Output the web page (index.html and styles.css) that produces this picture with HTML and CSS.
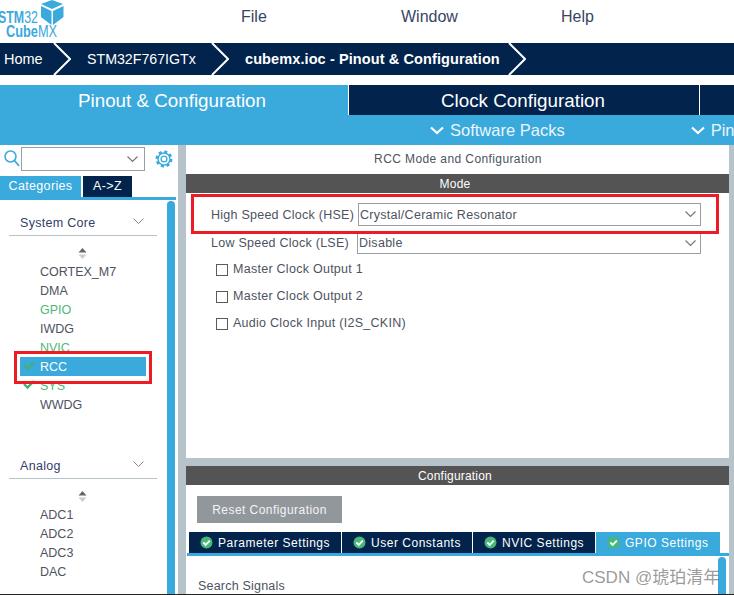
FILE: index.html
```html
<!DOCTYPE html>
<html lang="en">
<head>
<meta charset="utf-8">
<title>STM32CubeMX</title>
<link rel="stylesheet" href="styles.css">
</head>
<body>
<div class="app">
  <header class="top">
    <svg class="logo" width="66" height="43" viewBox="0 0 66 43">
      <polygon fill="#3aa9dc" points="41,4 52,0 63,4 52,9"/>
      <polygon fill="#3aa9dc" points="41,6 51.5,11 51.5,25 43.5,19 41,17"/>
      <polygon fill="#3aa9dc" points="53,11 63.5,6 63.5,17 53,25"/>
      <text x="-2" y="23" class="logo-t" textLength="40" lengthAdjust="spacingAndGlyphs"><tspan font-weight="700">STM</tspan>32</text>
      <text x="6" y="36.5" class="logo-t" textLength="51" lengthAdjust="spacingAndGlyphs"><tspan font-weight="700">Cube</tspan>MX</text>
    </svg>
    <nav class="menu">
      <span class="menu-item">File</span>
      <span class="menu-item">Window</span>
      <span class="menu-item">Help</span>
    </nav>
  </header>

  <div class="crumbs">
    <span class="crumb crumb-home">Home</span>
    <svg class="chev" width="18" height="32" viewBox="0 0 18 32"><path d="M1 0 L17 16 L1 32" fill="none" stroke="#fff" stroke-width="2"/></svg>
    <span class="crumb crumb-mcu">STM32F767IGTx</span>
    <svg class="chev" width="18" height="32" viewBox="0 0 18 32"><path d="M1 0 L17 16 L1 32" fill="none" stroke="#fff" stroke-width="2"/></svg>
    <span class="crumb crumb-file">cubemx.ioc - Pinout &amp; Configuration</span>
    <svg class="chev" width="18" height="32" viewBox="0 0 18 32"><path d="M1 0 L17 16 L1 32" fill="none" stroke="#fff" stroke-width="2"/></svg>
  </div>

  <div class="tabs">
    <div class="tab tab-pin">Pinout &amp; Configuration</div>
    <div class="tab tab-clock">Clock Configuration</div>
    <div class="tab tab-rest"></div>
  </div>

  <div class="subbar">
    <svg class="sub-chev" width="14" height="9" viewBox="0 0 14 9"><path d="M1 1.5 L7 7 L13 1.5" fill="none" stroke="#fff" stroke-width="2.2"/></svg>
    <span class="sub-text">Software Packs</span>
    <svg class="sub-chev sub-chev-2" width="14" height="9" viewBox="0 0 14 9"><path d="M1 1.5 L7 7 L13 1.5" fill="none" stroke="#fff" stroke-width="2.2"/></svg>
    <span class="sub-text">Pinout</span>
  </div>

  <main class="main">
    <aside class="side">
      <div class="search">
        <svg class="search-ico" width="17" height="18" viewBox="0 0 17 18"><circle cx="7.5" cy="7.5" r="5.5" fill="none" stroke="#3aa9dc" stroke-width="1.5"/><path d="M11.5 11.5 L16 17" stroke="#3aa9dc" stroke-width="1.8"/></svg>
        <div class="combo">
          <svg width="11" height="7" viewBox="0 0 11 7"><path d="M0.5 0.5 L5.5 5.5 L10.5 0.5" fill="none" stroke="#777" stroke-width="1.2"/></svg>
        </div>
        <svg class="gear" width="18" height="18" viewBox="0 0 18 18"><circle cx="9" cy="9" r="6" fill="none" stroke="#3aa9dc" stroke-width="1.4"/><circle cx="9" cy="9" r="7.3" fill="none" stroke="#3aa9dc" stroke-width="2.4" stroke-dasharray="3.1 2.63"/><circle cx="9" cy="9" r="2.9" fill="none" stroke="#3aa9dc" stroke-width="1.3"/></svg>
      </div>
      <div class="side-tabs">
        <span class="side-tab side-tab-on">Categories</span>
        <span class="side-tab side-tab-off">A-&gt;Z</span>
      </div>
      <div class="side-body">
        <div class="cats">
          <section class="cat cat-first">
            <div class="cat-head"><span>System Core</span>
              <svg width="11" height="7" viewBox="0 0 11 7"><path d="M0.5 0.5 L5.5 5.5 L10.5 0.5" fill="none" stroke="#888" stroke-width="1"/></svg>
            </div>
            <div class="sort"><svg width="9" height="11" viewBox="0 0 9 11"><polygon points="4.5,0 8.5,4.5 0.5,4.5" fill="#666"/><polygon points="4.5,11 8.5,6.5 0.5,6.5" fill="#ccc"/></svg></div>
            <ul class="items">
              <li class="item">CORTEX_M7</li>
              <li class="item">DMA</li>
              <li class="item item-green">GPIO</li>
              <li class="item">IWDG</li>
              <li class="item item-green">NVIC</li>
              <li class="item item-sel"><svg class="tick" width="12" height="9" viewBox="0 0 12 9"><path d="M1 4 L4.5 7.5 L11 1" fill="none" stroke="#46b06e" stroke-width="2.4"/></svg>RCC</li>
              <li class="item item-green"><svg class="tick" width="12" height="9" viewBox="0 0 12 9"><path d="M1 4 L4.5 7.5 L11 1" fill="none" stroke="#46b06e" stroke-width="2.4"/></svg>SYS</li>
              <li class="item">WWDG</li>
            </ul>
          </section>
          <section class="cat cat-next">
            <div class="cat-head"><span>Analog</span>
              <svg width="11" height="7" viewBox="0 0 11 7"><path d="M0.5 0.5 L5.5 5.5 L10.5 0.5" fill="none" stroke="#888" stroke-width="1"/></svg>
            </div>
            <div class="sort"><svg width="9" height="11" viewBox="0 0 9 11"><polygon points="4.5,0 8.5,4.5 0.5,4.5" fill="#666"/><polygon points="4.5,11 8.5,6.5 0.5,6.5" fill="#ccc"/></svg></div>
            <ul class="items">
              <li class="item">ADC1</li>
              <li class="item">ADC2</li>
              <li class="item">ADC3</li>
              <li class="item">DAC</li>
            </ul>
          </section>
        </div>
        <div class="side-bar"></div>
      </div>
    </aside>

    <div class="content">
      <section class="mode">
        <div class="mode-title">RCC Mode and Configuration</div>
        <div class="bar">Mode</div>
        <div class="form">
          <div class="row row-hse">
            <label class="lbl">High Speed Clock (HSE)</label>
            <div class="select select-hse"><span>Crystal/Ceramic Resonator</span><svg width="11" height="7" viewBox="0 0 11 7"><path d="M0.5 0.5 L5.5 5.5 L10.5 0.5" fill="none" stroke="#777" stroke-width="1.2"/></svg></div>
          </div>
          <div class="row row-lse">
            <label class="lbl">Low Speed Clock (LSE)</label>
            <div class="select select-lse"><span>Disable</span><svg width="11" height="7" viewBox="0 0 11 7"><path d="M0.5 0.5 L5.5 5.5 L10.5 0.5" fill="none" stroke="#777" stroke-width="1.2"/></svg></div>
          </div>
          <div class="checks">
            <div class="check"><i class="box"></i><span class="check-text">Master Clock Output 1</span></div>
            <div class="check"><i class="box"></i><span class="check-text">Master Clock Output 2</span></div>
            <div class="check"><i class="box"></i><span class="check-text">Audio Clock Input (I2S_CKIN)</span></div>
          </div>
        </div>
      </section>

      <section class="config">
        <div class="bar">Configuration</div>
        <button class="reset">Reset Configuration</button>
        <div class="cfg-tabs">
          <div class="cfg-tab cfg-1"><svg class="ok" width="13" height="13" viewBox="0 0 13 13"><circle cx="6.5" cy="6.5" r="6" fill="#46b87a"/><path d="M3.3 6.5 L5.7 8.8 L9.8 4.6" fill="none" stroke="#fff" stroke-width="1.9"/></svg>Parameter Settings</div>
          <div class="cfg-tab cfg-2"><svg class="ok" width="13" height="13" viewBox="0 0 13 13"><circle cx="6.5" cy="6.5" r="6" fill="#46b87a"/><path d="M3.3 6.5 L5.7 8.8 L9.8 4.6" fill="none" stroke="#fff" stroke-width="1.9"/></svg>User Constants</div>
          <div class="cfg-tab cfg-3"><svg class="ok" width="13" height="13" viewBox="0 0 13 13"><circle cx="6.5" cy="6.5" r="6" fill="#46b87a"/><path d="M3.3 6.5 L5.7 8.8 L9.8 4.6" fill="none" stroke="#fff" stroke-width="1.9"/></svg>NVIC Settings</div>
          <div class="cfg-tab cfg-4 cfg-on"><svg class="ok" width="13" height="13" viewBox="0 0 13 13"><circle cx="6.5" cy="6.5" r="6" fill="#46b87a"/><path d="M3.3 6.5 L5.7 8.8 L9.8 4.6" fill="none" stroke="#fff" stroke-width="1.9"/></svg>GPIO Settings</div>
        </div>
        <div class="cfg-body">
          <div class="signals">Search Signals</div>
          <div class="cfg-scroll"></div>
        </div>
      </section>
    </div>
  </main>

  <div class="mark mark-hse"></div>
  <div class="mark mark-rcc"></div>
  <div class="watermark">CSDN @琥珀清年</div>
  <div class="edge"></div>
</div>
</body>
</html>
```

FILE: styles.css
```css
* { box-sizing: border-box; }
html, body { margin: 0; padding: 0; height: 100%; overflow: hidden; background: #fff; }
body { font-family: "Liberation Sans", Arial, sans-serif; color: #4d5360; }
.app { position: relative; width: 734px; height: 595px; overflow: hidden; display: flex; flex-direction: column; }

/* header */
.top { height: 43px; display: flex; flex: none; position: relative; }
.logo { flex: none; margin-right: 175px; }
.logo-t { font-family: "Liberation Sans", sans-serif; font-size: 17px; fill: #3aa9dc; }
.menu { display: flex; }
.menu-item { width: 160px; font-size: 16px; line-height: 33px; color: #39455f; }

/* breadcrumbs */
.crumbs { height: 32px; flex: none; background: #02234b; display: flex; align-items: center; color: #fff; font-size: 14.2px; }
.crumb { white-space: nowrap; }
.chev { flex: none; }
.crumb-home { margin-left: 4px; width: 49px; font-size: 14.5px; }
.crumb-mcu { margin-left: 16px; width: 124px; }
.crumb-file { margin-left: 16px; width: 263px; font-weight: 700; font-size: 14.5px; letter-spacing: 0.1px; }

/* main tabs */
.tabs { height: 30px; flex: none; margin-top: 10px; display: flex; font-size: 18.8px; color: #fff; }
.tab { line-height: 32px; text-align: center; white-space: nowrap; }
.tab-pin { width: 349px; background: #3aa9dc; border-right: 1px solid #fff; padding-right: 4px; }
.tab-clock { width: 351px; background: #02234b; border-right: 1px solid #fff; padding-right: 2px; }
.tab-rest { flex: 1; background: #02234b; }

.subbar { height: 30px; flex: none; background: #3aa9dc; display: flex; align-items: center; color: #eaf6fc; font-size: 16.5px; padding-left: 430px; white-space: nowrap; }
.sub-chev { flex: none; margin-right: 6px; }
.sub-chev-2 { margin-left: 126px; }
.sub-text { flex: none; }

/* main */
.main { flex: 1; display: flex; background: #b7c3ca; min-height: 0; }
.side { width: 178px; flex: none; background: #fff; display: flex; flex-direction: column; }
.search { height: 31px; flex: none; display: flex; padding: 2px 0 0 3px; }
.search-ico { margin-top: 2px; flex: none; }
.combo { width: 124px; height: 24px; margin-left: 1px; border: 1px solid #9a9ea3; display: flex; align-items: center; justify-content: flex-end; padding-right: 6px; }
.gear { margin: 3px 0 0 10px; flex: none; }
.side-tabs { height: 21px; flex: none; display: flex; font-size: 12.5px; letter-spacing: 0.35px; color: #fff; }
.side-tab { line-height: 21px; text-align: center; }
.side-tab-on { width: 82px; background: #3aa9dc; border-right: 1px solid #fff; }
.side-tab-off { width: 49px; margin-left: 1px; background: #02234b; }
.side-body { flex: 1; display: flex; border-top: 3px solid #3aa9dc; margin-right: 2px; min-height: 0; overflow: hidden; }
.cats { width: 167px; flex: none; color: #4d5360; }
.cat-first { padding-top: 13px; }
.cat-next { margin-top: 42px; }
.cat-head { margin: 0 10px 0 9px; height: 23px; padding: 0 13px 2px 11px; border-bottom: 1px solid #b7c3ca; display: flex; justify-content: space-between; font-size: 12.5px; line-height: 21px; letter-spacing: 0.3px; color: #33406a; }
.cat-head svg { margin-top: 5px; }
.sort { height: 26px; padding-top: 12px; display: flex; justify-content: center; padding-right: 3px; }
.items { list-style: none; margin: 0; padding: 0 0 0 20px; }
.item { height: 19px; line-height: 20px; font-size: 12.5px; padding-left: 20px; width: 126px; position: relative; }
.item-green { color: #4fb878; }
.item-sel { background: #3aa9dc; color: #fff; }
.tick { position: absolute; left: 3px; top: 4px; }
.side-bar { width: 8px; flex: none; margin-top: 1px; background: #3aa9dc; border-radius: 4px 4px 0 0; }

.content { flex: 1; margin: 0 5px 0 8px; display: flex; flex-direction: column; gap: 8px; min-width: 0; }
.mode { height: 313px; flex: none; background: #fff; }
.mode-title { height: 29px; line-height: 29px; text-align: center; font-size: 12px; letter-spacing: 0.4px; padding-left: 1px; }
.bar { height: 19px; line-height: 20px; background: #545454; color: #fff; text-align: center; font-size: 12px; padding-right: 5px; letter-spacing: 0.2px; }
.form { padding-top: 10px; font-size: 12.5px; }
.row { display: flex; align-items: center; }
.row-lse { margin-top: 6px; }
.lbl { padding-left: 25px; letter-spacing: 0.25px; white-space: nowrap; flex: none; }
.row-hse .lbl { width: 172px; }
.row-lse .lbl { width: 171px; }
.select { height: 23px; width: 343px; border: 1px solid #9a9ea3; display: flex; justify-content: space-between; align-items: center; padding: 0 4px 0 1px; flex: none; letter-spacing: 0.28px; }
.select-lse { width: 344px; height: 22px; }
.checks { margin-top: 2px; padding-left: 30px; }
.check { height: 27px; display: flex; align-items: center; letter-spacing: 0.27px; }
.check-text { margin-top: -1px; }
.box { width: 12px; height: 12px; border: 1px solid #5a5a5a; margin-right: 5px; flex: none; }

.config { flex: 1; background: #fff; display: flex; flex-direction: column; min-height: 0; }
.reset { width: 145px; height: 27px; margin: 11px 0 0 11px; border: 0; background: #92979c; color: #f3f4f5; font: 12px "Liberation Sans", sans-serif; letter-spacing: 0.45px; padding: 0; flex: none; }
.cfg-tabs { display: flex; gap: 1px; margin: 9px 0 0 3px; height: 21px; flex: none; }
.cfg-tab { background: #02234b; color: #fff; font-size: 12px; letter-spacing: 0.52px; line-height: 22px; display: flex; align-items: flex-start; padding-left: 11px; white-space: nowrap; }
.cfg-on { background: #3aa9dc; }
.cfg-1 { width: 152px; }
.cfg-2 { width: 130px; }
.cfg-3 { width: 122px; }
.cfg-4 { width: 124px; }
.ok { margin: 4px 5px 0 0; flex: none; }
.cfg-body { flex: 1; margin-left: 1px; border-top: 3px solid #3aa9dc; display: flex; justify-content: space-between; min-height: 0; overflow: hidden; }
.signals { font-size: 12.5px; padding: 22px 0 0 11px; line-height: 16px; letter-spacing: 0.2px; }
.cfg-scroll { width: 8px; margin: 1px 3px 0 0; background: #3aa9dc; border-radius: 4px 4px 0 0; }

/* overlays */
.mark { position: absolute; border: 3px solid #ed1c24; pointer-events: none; }
.mark-hse { left: 191px; top: 194px; width: 528px; height: 40px; }
.mark-rcc { left: 14px; top: 351px; width: 138px; height: 33px; }
.watermark { position: absolute; left: 582px; top: 563px; font: 17px "Liberation Sans", "Noto Sans CJK SC", sans-serif; color: rgba(110,110,110,0.7); white-space: nowrap; }
.edge { position: absolute; left: 0; right: 0; bottom: 0; height: 1px; background: #222; }
```
